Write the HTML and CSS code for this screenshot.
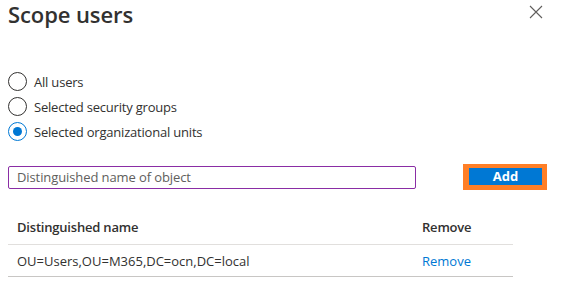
FILE: index.html
```html
<!DOCTYPE html>
<html>
<head>
<meta charset="utf-8">
<link rel="stylesheet" href="styles.css">
</head>
<body>
<div class="panel">
  <div class="header">
    <h1 class="title">Scope users</h1>
    <button class="close" aria-label="Close">
      <svg width="14" height="14" viewBox="0 0 14 14"><path d="M1 1L13 13M13 1L1 13" stroke="#605e5c" stroke-width="1.1" fill="none"/></svg>
    </button>
  </div>
  <div class="radios">
    <label class="radio"><span class="circle"></span><span>All users</span></label>
    <label class="radio"><span class="circle"></span><span>Selected security groups</span></label>
    <label class="radio"><span class="circle checked"></span><span>Selected organizational units</span></label>
  </div>
  <div class="addrow">
    <div class="input">Distinguished name of object</div>
    <div class="highlight"><button class="add">Add</button></div>
  </div>
  <div class="table">
    <div class="row head"><div class="c1">Distinguished name</div><div class="c2">Remove</div></div>
    <div class="row"><div class="c1">OU=Users,OU=M365,DC=ocn,DC=local</div><div class="c2 link">Remove</div></div>
  </div>
</div>
</body>
</html>
```
FILE: styles.css
```css
html, body { margin: 0; padding: 0; background: #fff; }
body { font-family: "Open Sans", "Noto Sans", sans-serif; color: #323130; font-size: 13px; }
.panel { padding: 0 8px; width: 563px; box-sizing: border-box; }
.header { display: flex; justify-content: space-between; align-items: flex-start; height: 69px; }
.title { margin: 0; font-size: 22px; font-weight: 600; line-height: 28px; letter-spacing: -0.1px; }
.close { margin: 5px 12px 0 0; padding: 0; border: 0; background: none; width: 14px; height: 14px; display: flex; }
.radios { display: flex; flex-direction: column; letter-spacing: -0.2px; }
.radio { display: flex; align-items: center; height: 25px; gap: 7px; }
.circle { width: 19px; height: 19px; border: 1px solid #323130; border-radius: 50%; box-sizing: border-box; display: flex; align-items: center; justify-content: center; }
.circle.checked { border-color: #0078d4; }
.circle.checked::after { content: ""; width: 9px; height: 9px; border-radius: 50%; background: #0078d4; }
.addrow { display: flex; align-items: center; margin-top: 20px; }
.input { width: 408px; height: 23px; box-sizing: border-box; border: 1px solid #8a2da5; border-radius: 2px; padding: 0 8px; line-height: 21px; color: #605e5c; letter-spacing: -0.1px; }
.highlight { margin-left: 47px; border-style: solid; border-color: #ff7f27; border-width: 4px 5px 5px 6px; display: flex; }
.add { width: 73px; height: 17px; border: 0; background: #0078d4; color: #fff; font-family: inherit; font-weight: 700; font-size: 13px; padding: 0; line-height: 17px; }
.table { margin-top: 20px; width: 505px; }
.row { display: flex; height: 31px; align-items: center; border-bottom: 1px solid #e1dfdd; padding-left: 9px; }
.row:last-child { border-bottom-color: #c8c6c4; }
.row.head { height: 34px; font-weight: 600; letter-spacing: -0.2px; }
.c1 { width: 405px; }
.link { color: #0078d4; }
```
